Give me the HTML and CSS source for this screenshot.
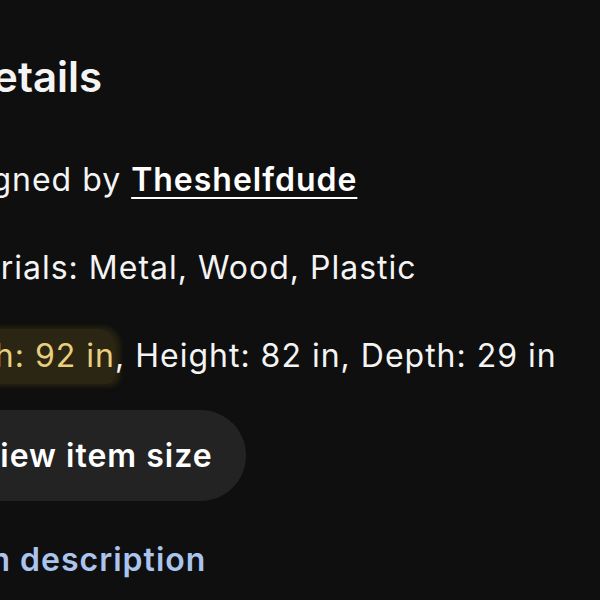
FILE: index.html
```html
<!DOCTYPE html>
<html>
<head>
<meta charset="utf-8">
<link rel="stylesheet" href="styles.css">
</head>
<body>
<section class="details">
  <h2 class="title">Item details</h2>
  <p class="row">Designed by <a class="shop" href="#">Theshelfdude</a></p>
  <p class="row">Materials: Metal, Wood, Plastic</p>
  <p class="row"><span class="mark">Width: 92 in</span>, Height: 82 in, Depth: 29 in</p>
  <button class="size-btn">View item size</button>
  <a class="desc" href="#">Item description</a>
</section>
</body>
</html>
```
FILE: styles.css
```css
html, body {
  margin: 0;
  padding: 0;
  background: #0f0f0f;
  overflow: hidden;
  height: 600px;
}
body {
  font-family: Inter, "Noto Sans", sans-serif;
  color: #f4f4f4;
}
.details {
  display: flex;
  flex-direction: column;
  align-items: flex-start;
  padding-top: 49px;
}
.title {
  margin: 0 0 0 -133px;
  font-size: 42px;
  font-weight: 600;
  line-height: 56px;
}
.row {
  margin: 32px 0 0 -79px;
  font-size: 32px;
  letter-spacing: 1px;
  line-height: 56px;
  white-space: nowrap;
}
.row:first-of-type {
  margin-top: 47px;
}
.shop {
  color: #ffffff;
  font-weight: 600;
  text-decoration: underline;
  text-decoration-thickness: 2px;
  text-underline-offset: 6px;
}
.mark {
  color: #e9cf7d;
  background: #2b2613;
  box-shadow: 3px 0 5px 2px #29240f;
  border-radius: 2px 16px 8px 2px;
  padding: 7px 0 9px 0;
}
.size-btn {
  margin: 26px 0 0 -74px;
  height: 91px;
  padding: 0 33px 0 50px;
  border: none;
  border-radius: 46px;
  background: #232323;
  color: #ffffff;
  font-family: Inter, "Noto Sans", sans-serif;
  font-size: 32px;
  letter-spacing: 1px;
  font-weight: 600;
}
.desc {
  margin: 39px 0 0 -61px;
  color: #aac4ee;
  font-size: 32px;
  letter-spacing: 1px;
  font-weight: 600;
  text-decoration: none;
  line-height: 40px;
}
```
